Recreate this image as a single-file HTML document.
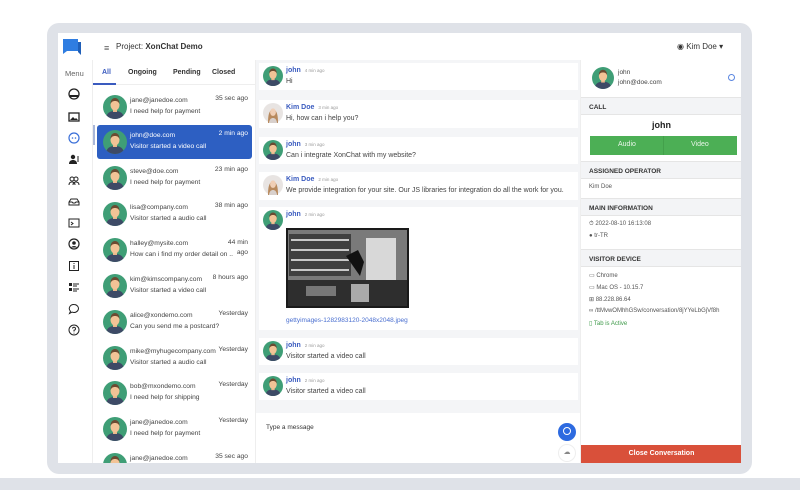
<!DOCTYPE html>
<html><head><meta charset="utf-8"><style>
*{box-sizing:border-box;margin:0;padding:0}
body{width:800px;height:500px;background:#fff;font-family:"Liberation Sans",sans-serif;position:relative;overflow:hidden;color:#333}
.abs{position:absolute}
.frame{left:47px;top:23px;width:705px;height:451px;background:#dfe2e8;border-radius:12px}
.bar{left:0;top:478px;width:800px;height:12px;background:#dfe2e8}
.screen{left:58px;top:33px;width:683px;height:430px;background:#fff;overflow:hidden}
.ic{position:absolute;left:10px;width:12px;height:12px}
.item{position:absolute;left:4px;width:155px;height:34px;font-size:6.7px;color:#444}
.item .av{position:absolute;left:6px;top:5px;width:24px;height:24px}
.item .em{position:absolute;left:33px;top:7px}
.item .tx{position:absolute;left:33px;top:18px}
.item .tm{position:absolute;right:4px;top:5px;text-align:right}
.sel{background:#2d5fc2;border-radius:3px;color:#fff}
.msg{position:absolute;left:3px;width:319px;background:#fff}
.msg .av{position:absolute;left:4px;top:3px;width:20px;height:20px}
.msg .n{position:absolute;left:27px;top:4px;font-size:7px;font-weight:bold;color:#3a5bbf}
.msg .n small{font-weight:normal;color:#999;font-size:4.5px;margin-left:4px}
.msg .t{position:absolute;left:27px;top:15px;font-size:7px;color:#444}
.sec{position:absolute;left:0;width:161px;height:18px;background:#f3f4f6;font-size:6.5px;font-weight:bold;padding:6px 8px;color:#333;border-top:1px solid #e5e5e5;border-bottom:1px solid #e5e5e5}
.row{position:absolute;left:8px;font-size:6px;color:#555}
</style></head><body>
<svg width="0" height="0" style="position:absolute"><defs>
<symbol id="av" viewBox="0 0 24 24"><circle cx="12" cy="12" r="12" fill="#3f9e76"/><clipPath id="c"><circle cx="12" cy="12" r="12"/></clipPath><g clip-path="url(#c)"><path d="M3 24c0-6 4-8 9-8s9 2 9 8z" fill="#3d4a66"/><rect x="10" y="13" width="4" height="4" fill="#e9b98a"/><ellipse cx="12" cy="10" rx="4.5" ry="5.5" fill="#f2c396"/><path d="M7.5 9c0-4 2-6 4.5-6s4.5 2 4.5 6c-1-2-2-3-4.5-3S8.5 7 7.5 9z" fill="#6b4b32"/></g></symbol>
<symbol id="kim" viewBox="0 0 24 24"><circle cx="12" cy="12" r="12" fill="#e8e4e2"/><path d="M6 24c0-8 1-16 6-16s6 8 6 16z" fill="#b88a5e"/><ellipse cx="12" cy="11" rx="3.5" ry="4.5" fill="#f0cfb6"/><path d="M7 24c1-5 3-6 5-6s4 1 5 6z" fill="#d8d0cc"/></symbol>
</defs></svg>
<div class="abs frame"></div>
<div class="abs bar"></div>
<div class="abs screen">
 <svg class="abs" style="left:4px;top:5px" width="20" height="18" viewBox="0 0 20 18"><path d="M1 1h15v12H5l-4 3z" fill="#2f7de1"/><path d="M16 4h3v13l-3-3z" fill="#1f5fb8"/></svg>
 <div class="abs" style="left:46px;top:10px;font-size:9px;color:#555">≡</div>
 <div class="abs" style="left:58px;top:9px;font-size:8px;color:#333">Project: <b>XonChat Demo</b></div>
 <div class="abs" style="left:619px;top:9px;font-size:8px;color:#333">◉ Kim Doe ▾</div>
 <div class="abs" style="left:7px;top:36px;font-size:7.5px;color:#666">Menu</div>
 <div class="abs" style="left:35px;top:92px;width:2px;height:20px;background:#a9b7d9"></div>
 <div style="position:absolute;left:0;top:0">
 <svg class="ic" style="top:55px" viewBox="0 0 12 12"><circle cx="6" cy="6" r="5" fill="none" stroke="#222" stroke-width="1.3"/><path d="M2 7h8v2H2z" fill="#222"/></svg>
 <svg class="ic" style="top:78px" viewBox="0 0 12 12"><rect x="1" y="2" width="10" height="8" fill="none" stroke="#222" stroke-width="1.3"/><path d="M2 9l3-3 2 2 1-1 2 2z" fill="#222"/></svg>
 <svg class="ic" style="top:99px" viewBox="0 0 12 12"><circle cx="6" cy="6" r="5" fill="none" stroke="#3a6fd8" stroke-width="1.2"/><circle cx="4.5" cy="6" r=".8" fill="#3a6fd8"/><circle cx="7.5" cy="6" r=".8" fill="#3a6fd8"/></svg>
 <svg class="ic" style="top:120px" viewBox="0 0 12 12"><circle cx="5" cy="4" r="2.2" fill="#222"/><path d="M1 11c0-3 2-4 4-4s4 1 4 4z" fill="#222"/><path d="M10 3v6" stroke="#222"/></svg>
 <svg class="ic" style="top:142px" viewBox="0 0 12 12"><circle cx="4" cy="4" r="2" fill="none" stroke="#222"/><circle cx="8" cy="4" r="2" fill="none" stroke="#222"/><path d="M1 10c0-2 1-3 3-3s3 1 3 3M5 10c0-2 1-3 3-3s3 1 3 3" fill="none" stroke="#222"/></svg>
 <svg class="ic" style="top:163px" viewBox="0 0 12 12"><path d="M1 6l2-3h6l2 3v3H1z M1 6h3l1 1h2l1-1h3" fill="none" stroke="#222"/></svg>
 <svg class="ic" style="top:184px" viewBox="0 0 12 12"><rect x="1" y="2" width="10" height="8" fill="none" stroke="#222"/><path d="M3 5l2 1.5L3 8" fill="none" stroke="#222"/></svg>
 <svg class="ic" style="top:205px" viewBox="0 0 12 12"><circle cx="6" cy="6" r="5" fill="none" stroke="#222" stroke-width="1.2"/><circle cx="6" cy="5" r="1.8" fill="#222"/><path d="M3 9.5c1-2 5-2 6 0z" fill="#222"/></svg>
 <svg class="ic" style="top:227px" viewBox="0 0 12 12"><rect x="1.5" y="1.5" width="9" height="9" fill="none" stroke="#222"/><path d="M6 3v1M6 5v4" stroke="#222"/></svg>
 <svg class="ic" style="top:248px" viewBox="0 0 12 12"><rect x="1" y="2" width="3" height="3" fill="#222"/><rect x="1" y="7" width="3" height="3" fill="#222"/><path d="M5 3h6M5 5h4M5 8h6M5 10h4" stroke="#222"/></svg>
 <svg class="ic" style="top:270px" viewBox="0 0 12 12"><path d="M6 1.5a4.5 4 0 1 1-2 7.6L1.5 10.5l1-2.3A4.5 4 0 0 1 6 1.5z" fill="none" stroke="#222"/></svg>
 <svg class="ic" style="top:291px" viewBox="0 0 12 12"><circle cx="6" cy="6" r="5" fill="none" stroke="#222"/><path d="M4.5 4.5a1.5 1.5 0 1 1 1.5 1.7V7.5M6 8.7v.8" fill="none" stroke="#222"/></svg>
 </div>
 <div class="abs" style="left:34px;top:27px;width:163px;height:403px;border-left:1px solid #eee">
  <div class="abs" style="left:0;top:0;width:163px;height:25px;border-bottom:1px solid #eee;font-size:7px;font-weight:bold;color:#333">
   <span class="abs" style="left:9px;top:9px;color:#3a5bbf">All</span>
   <span class="abs" style="left:35px;top:9px">Ongoing</span>
   <span class="abs" style="left:80px;top:9px">Pending</span>
   <span class="abs" style="left:119px;top:9px">Closed</span>
   <div class="abs" style="left:0;top:23px;width:23px;height:2px;background:#3a5bbf"></div>
  </div>
  <div class="item" style="top:30px"><svg class="av"><use href="#av"/></svg><div class="em">jane@janedoe.com</div><div class="tx">I need help for payment</div><div class="tm">35 sec ago</div></div>
  <div class="item sel" style="top:65px"><svg class="av"><use href="#av"/></svg><div class="em">john@doe.com</div><div class="tx">Visitor started a video call</div><div class="tm">2 min ago</div></div>
  <div class="item" style="top:101px"><svg class="av"><use href="#av"/></svg><div class="em">steve@doe.com</div><div class="tx">I need help for payment</div><div class="tm">23 min ago</div></div>
  <div class="item" style="top:137px"><svg class="av"><use href="#av"/></svg><div class="em">lisa@company.com</div><div class="tx">Visitor started a audio call</div><div class="tm">38 min ago</div></div>
  <div class="item" style="top:173px"><svg class="av"><use href="#av"/></svg><div class="em">halley@mysite.com</div><div class="tx">How can i find my order detail on ..</div><div class="tm" style="line-height:10px">44 min<br>ago</div></div>
  <div class="item" style="top:209px"><svg class="av"><use href="#av"/></svg><div class="em">kim@kimscompany.com</div><div class="tx">Visitor started a video call</div><div class="tm">8 hours ago</div></div>
  <div class="item" style="top:245px"><svg class="av"><use href="#av"/></svg><div class="em">alice@xondemo.com</div><div class="tx">Can you send me a postcard?</div><div class="tm">Yesterday</div></div>
  <div class="item" style="top:281px"><svg class="av"><use href="#av"/></svg><div class="em">mike@myhugecompany.com</div><div class="tx">Visitor started a audio call</div><div class="tm">Yesterday</div></div>
  <div class="item" style="top:316px"><svg class="av"><use href="#av"/></svg><div class="em">bob@mxondemo.com</div><div class="tx">I need help for shipping</div><div class="tm">Yesterday</div></div>
  <div class="item" style="top:352px"><svg class="av"><use href="#av"/></svg><div class="em">jane@janedoe.com</div><div class="tx">I need help for payment</div><div class="tm">Yesterday</div></div>
  <div class="item" style="top:388px"><svg class="av"><use href="#av"/></svg><div class="em">jane@janedoe.com</div><div class="tm">35 sec ago</div></div>
 </div>
 <div class="abs" style="left:197px;top:27px;width:325px;height:403px;background:#f4f5f7;border-left:1px solid #eee">
  <div class="msg" style="top:3px;height:27px"><svg class="av"><use href="#av"/></svg><div class="n">john<small>4 min ago</small></div><div class="t">Hi</div></div>
  <div class="msg" style="top:40px;height:28px"><svg class="av"><use href="#kim"/></svg><div class="n">Kim Doe<small>3 min ago</small></div><div class="t">Hi, how can i help you?</div></div>
  <div class="msg" style="top:77px;height:27px"><svg class="av"><use href="#av"/></svg><div class="n">john<small>3 min ago</small></div><div class="t">Can i integrate XonChat with my website?</div></div>
  <div class="msg" style="top:112px;height:28px"><svg class="av"><use href="#kim"/></svg><div class="n">Kim Doe<small>2 min ago</small></div><div class="t">We provide integration for your site. Our JS libraries for integration do all the work for you.</div></div>
  <div class="msg" style="top:147px;height:123px"><svg class="av"><use href="#av"/></svg><div class="n">john<small>2 min ago</small></div>
   <svg class="abs" style="left:27px;top:21px" width="123" height="80" viewBox="0 0 123 80"><rect width="123" height="80" fill="#1a1a1a"/><rect x="2" y="2" width="119" height="76" fill="#7a7a7a"/><rect x="3" y="6" width="62" height="42" fill="#3f3f3f"/><path d="M5 12h58M5 22h58M5 32h58M5 42h58" stroke="#c8c8c8" stroke-width="2"/><rect x="80" y="10" width="30" height="42" fill="#d8d8d8"/><rect x="2" y="52" width="119" height="26" fill="#2e2e2e"/><rect x="65" y="56" width="18" height="18" fill="#aaa"/><rect x="20" y="58" width="30" height="10" fill="#777"/><path d="M60 28l12-6 6 12-4 14z" fill="#111"/></svg>
   <div class="abs" style="left:27px;top:110px;font-size:6.5px;color:#4a6fd0">gettyimages-1282983120-2048x2048.jpeg</div></div>
  <div class="msg" style="top:278px;height:27px"><svg class="av"><use href="#av"/></svg><div class="n">john<small>2 min ago</small></div><div class="t">Visitor started a video call</div></div>
  <div class="msg" style="top:313px;height:27px"><svg class="av"><use href="#av"/></svg><div class="n">john<small>2 min ago</small></div><div class="t">Visitor started a video call</div></div>
  <div class="abs" style="left:0;top:353px;width:325px;height:50px;background:#fff">
   <div class="abs" style="left:10px;top:11px;font-size:6.5px;color:#333">Type a message</div>
   <div class="abs" style="left:302px;top:10px;width:18px;height:18px;border-radius:50%;background:#2d6ae0"></div>
   <div class="abs" style="left:307px;top:14px;width:8px;height:8px;border-radius:50%;border:1px solid #fff"></div>
   <div class="abs" style="left:302px;top:31px;width:18px;height:18px;border-radius:50%;border:1px solid #eee;font-size:7px;color:#888;text-align:center;line-height:16px">☁</div>
  </div>
 </div>
 <div class="abs" style="left:522px;top:27px;width:161px;height:403px;background:#fff;border-left:1px solid #eee">
  <svg class="abs" style="left:11px;top:7px" width="22" height="22"><use href="#av"/></svg>
  <div class="abs" style="left:37px;top:9px;font-size:6.5px;color:#444">john</div>
  <div class="abs" style="left:37px;top:19px;font-size:6.5px;color:#444">john@doe.com</div>
  <div class="abs" style="left:147px;top:14px;width:7px;height:7px;border:1px solid #5a86e0;border-radius:50%"></div>
  <div class="sec" style="top:37px">CALL</div>
  <div class="abs" style="left:0;top:60px;width:161px;text-align:center;font-size:9px;font-weight:bold;color:#222">john</div>
  <div class="abs" style="left:9px;top:76px;width:147px;height:19px;background:#4caf55;font-size:7px;color:#e8f5e8">
   <span class="abs" style="left:28px;top:5px">Audio</span><div class="abs" style="left:73px;top:0;width:1px;height:19px;background:#43a04b"></div><span class="abs" style="left:101px;top:5px">Video</span></div>
  <div class="sec" style="top:101px">ASSIGNED OPERATOR</div>
  <div class="row" style="top:124px">Kim Doe</div>
  <div class="sec" style="top:138px">MAIN INFORMATION</div>
  <div class="row" style="top:161px">⏱ 2022-08-10 16:13:08</div>
  <div class="row" style="top:173px">● tr-TR</div>
  <div class="sec" style="top:189px">VISITOR DEVICE</div>
  <div class="row" style="top:212px">▭ Chrome</div>
  <div class="row" style="top:224px">▭ Mac OS - 10.15.7</div>
  <div class="row" style="top:236px">⊞ 88.228.86.64</div>
  <div class="row" style="top:248px">∞ /ttMvwOMhhGSw/conversation/8jYYeLbGjVf8h</div>
  <div class="row" style="top:260px;color:#3f9a4a">▯ Tab is Active</div>
  <div class="abs" style="left:0;top:385px;width:161px;height:18px;background:#d9503a;color:#fff;font-size:7px;font-weight:bold;text-align:center;line-height:18px">Close Conversation</div>
 </div>
</div>
</body></html>
